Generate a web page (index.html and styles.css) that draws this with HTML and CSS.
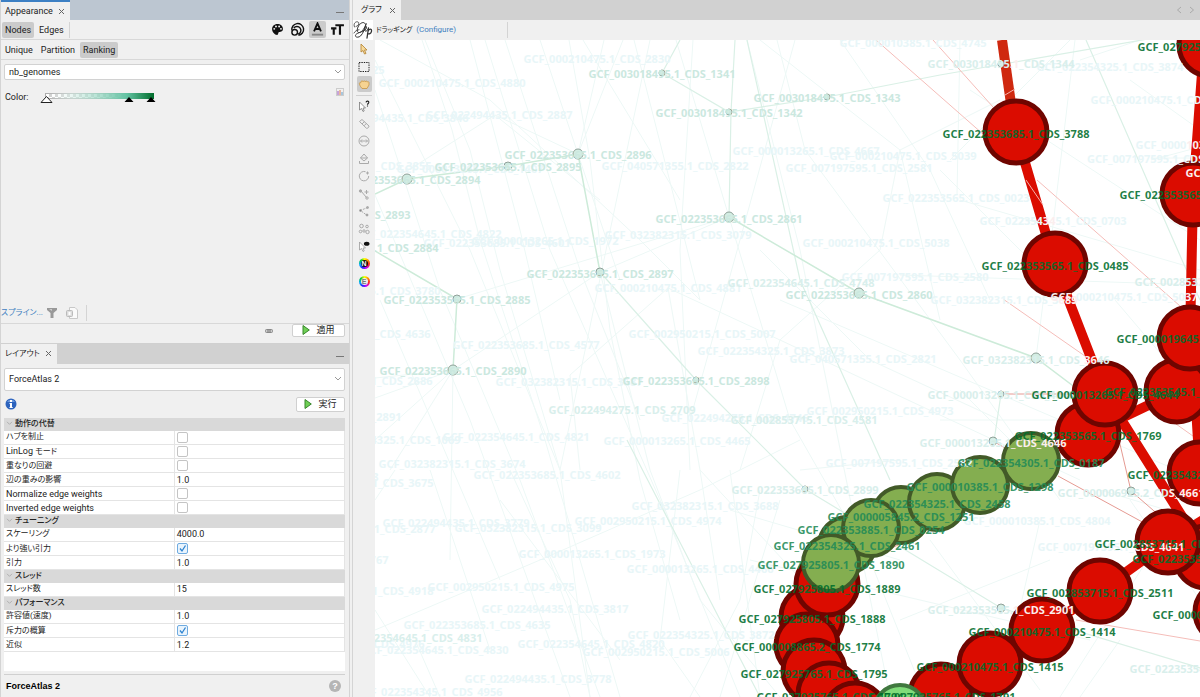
FILE: index.html
```html
<!DOCTYPE html>
<html lang="ja">
<head>
<meta charset="utf-8">
<title>Gephi</title>
<link rel="stylesheet" href="styles.css">
</head>
<body>
<div class="app">
  <aside class="sidebar">
    <section class="panel appearance">
      <header class="tabs tabs-active">
        <div class="tab tab-blue">Appearance <button class="close" aria-label="閉じる"><svg viewBox="0 0 7 7"><path d="M1 1l5 5M6 1l-5 5"/></svg></button></div>
        <button class="minimize" aria-label="最小化"></button>
      </header>
      <div class="toolrow">
        <button class="chip on">Nodes</button><button class="chip">Edges</button><span class="divider"></span>
        <div class="modes">
          <button class="mode" aria-label="色"><svg viewBox="0 0 12 12"><path fill="#111" fill-rule="evenodd" d="M6 1C2.800 1 1 3.300 1 5.600 1 8.500 3.400 11 5.600 11c1.500 0 .7-1.700 1.500-2.400C8.200 7.700 11 8.700 11 5.300 11 2.900 8.700 1 6 1zM3 6.300a.9.9 0 1 1 0-1.800.9.9 0 0 1 0 1.800zM4.600 4.100a.9.9 0 1 1 0-1.800.9.9 0 0 1 0 1.800zM7.500 4.100a.9.9 0 1 1 0-1.800.9.9 0 0 1 0 1.800zM9.200 6.300a.9.9 0 1 1 0-1.800.9.9 0 0 1 0 1.800z"/></svg></button>
          <button class="mode" aria-label="サイズ"><svg viewBox="0 0 16 16" fill="none" stroke="#111" stroke-width="1.500"><path d="M2 9A6.300 6.300 0 1 1 9 14.200"/><path d="M4 6.500a4.200 4.200 0 1 1 4.500 6.500"/><circle cx="5" cy="11" r="3"/></svg></button>
          <button class="mode on" aria-label="ラベルの色"><svg viewBox="0 0 16 16"><path d="M4.300 10L8 1.500l3.700 8.500M5.600 7.500h4.800" fill="none" stroke="#111" stroke-width="2"/><path d="M2 12.500h12v2H2z" fill="#888"/></svg></button>
          <button class="mode" aria-label="ラベルのサイズ"><svg viewBox="0 0 14 14"><path d="M1 6h5M3.500 6v6M5 3h8M9.300 3v9" fill="none" stroke="#111" stroke-width="2"/></svg></button>
        </div>
      </div>
      <div class="toolrow">
        <button class="chip">Unique</button><button class="chip">Partition</button><button class="chip on">Ranking</button>
      </div>
      <div class="appearance-body">
        <div class="select-wrap"><select class="select" aria-label="属性"><option>nb_genomes</option></select><svg class="chevron" viewBox="0 0 8 6"><path d="M1 1l3 3 3-3"/></svg></div>
        <div class="color-row">
          <span>Color:</span>
          <svg class="gradient" viewBox="0 0 118 14">
            <defs><linearGradient id="g"><stop offset="0" stop-color="#fff" stop-opacity="0"/><stop offset=".25" stop-color="#d9f0e9" stop-opacity=".6"/><stop offset=".75" stop-color="#62c2a2"/><stop offset="1" stop-color="#006d2c"/></linearGradient>
            <pattern id="ck" width="6" height="6" patternUnits="userSpaceOnUse"><path fill="#fff" d="M0 0h6v6H0z"/><path fill="#ccc" d="M0 0h3v3H0zM3 3h3v3H3z"/></pattern></defs>
            <rect x="5.500" y="2.500" width="108" height="5" fill="url(#ck)" stroke="#aaa"/><rect x="5" y="2" width="109" height="6" fill="url(#g)"/>
            <path d="M6.500 5.500l5.500 6H1z" fill="#fff" stroke="#222"/><path d="M89 6l4.500 5h-9zM111 6l4.500 5h-9z"/>
          </svg>
          <button class="palette" aria-label="パレット"><svg viewBox="0 0 8 8"><path fill="#ccc" d="M0 0h8v8H0z"/><path fill="#f0f0f0" d="M1 1h6v6H1z"/><path fill="#c6a3d8" d="M1 3h2v4H1z"/><path fill="#e9b7a0" d="M3 2h2v5H3z"/><path fill="#a7c7de" d="M5 4h2v3H5z"/></svg></button>
        </div>
      </div>
      <div class="linkrow">
        <a class="link ja" href="#">スプライン...</a>
        <svg class="funnel" viewBox="0 0 12 12"><path d="M1 1h10v2L7.500 6v5h-3V6L1 3z" fill="#999"/><path d="M3 2h3v2z" fill="#ccc"/></svg>
        <svg class="sheet" viewBox="0 0 12 12"><path d="M3.500.5H9L11.500 3v8.500h-8z" fill="#fafafa" stroke="#c8c8c8"/><rect x=".5" y="3.500" width="6" height="6" rx="1" fill="#ddd" stroke="#bbb"/><path d="M2.500 5h2v3h-2z" fill="#fff"/></svg>
        <span class="divider"></span>
      </div>
      <footer class="applyrow">
        <svg class="chain" viewBox="0 0 8 4"><rect x=".5" y=".5" width="7" height="3" rx="1" fill="#ccc" stroke="#888"/><path d="M2 2h4" stroke="#777"/></svg>
        <button class="run"><svg viewBox="0 0 8 10"><path d="M1 .5L7.300 5 1 9.500z" fill="#6fcf55" stroke="#38862c"/></svg>適用</button>
      </footer>
    </section>

    <section class="panel layout">
      <header class="tabs">
        <div class="tab"><span class="ja">レイアウト</span> <button class="close" aria-label="閉じる"><svg viewBox="0 0 7 7"><path d="M1 1l5 5M6 1l-5 5"/></svg></button></div>
        <button class="minimize" aria-label="最小化"></button>
      </header>
      <div class="layout-body">
        <div class="select-wrap"><select class="select tall" aria-label="レイアウト"><option>ForceAtlas 2</option></select><svg class="chevron" viewBox="0 0 8 6"><path d="M1 1l3 3 3-3"/></svg></div>
        <div class="execrow">
          <svg class="info" viewBox="0 0 12 12"><circle cx="6" cy="6" r="5.500" fill="#2c63bd"/><path d="M2 4a4.500 4 0 0 1 8 0z" fill="#6f9be0"/><path d="M5 2h2v2H5zM4.500 5H7v4h.7v1H4.500V9H5V6h-.5z" fill="#fff"/></svg>
          <button class="run"><svg viewBox="0 0 8 10"><path d="M1 .5L7.300 5 1 9.500z" fill="#6fcf55" stroke="#38862c"/></svg>実行</button>
        </div>
        <div class="props-box">
        <table class="props">
          <tbody>
          <tr class="group"><th colspan="2"><svg viewBox="0 0 8 6"><path d="M1 1l3 3 3-3"/></svg>動作の代替</th></tr>
          <tr><td class="ja"><label for="p1">ハブを制止</label></td><td><input id="p1" type="checkbox"></td></tr>
          <tr><td><label for="p2">LinLog <span class="ja">モード</span></label></td><td><input id="p2" type="checkbox"></td></tr>
          <tr><td class="ja"><label for="p3">重なりの回避</label></td><td><input id="p3" type="checkbox"></td></tr>
          <tr><td class="ja">辺の重みの影響</td><td>1.0</td></tr>
          <tr><td><label for="p4">Normalize edge weights</label></td><td><input id="p4" type="checkbox"></td></tr>
          <tr><td><label for="p5">Inverted edge weights</label></td><td><input id="p5" type="checkbox"></td></tr>
          <tr class="group"><th colspan="2"><svg viewBox="0 0 8 6"><path d="M1 1l3 3 3-3"/></svg>チューニング</th></tr>
          <tr><td class="ja">スケーリング</td><td>4000.0</td></tr>
          <tr><td class="ja"><label for="p6">より強い引力</label></td><td><input id="p6" type="checkbox" checked></td></tr>
          <tr><td class="ja">引力</td><td>1.0</td></tr>
          <tr class="group"><th colspan="2"><svg viewBox="0 0 8 6"><path d="M1 1l3 3 3-3"/></svg>スレッド</th></tr>
          <tr><td class="ja">スレッド数</td><td>15</td></tr>
          <tr class="group"><th colspan="2"><svg viewBox="0 0 8 6"><path d="M1 1l3 3 3-3"/></svg>パフォーマンス</th></tr>
          <tr><td class="ja">許容値(速度)</td><td>1.0</td></tr>
          <tr><td class="ja"><label for="p7">斥力の概算</label></td><td><input id="p7" type="checkbox" checked></td></tr>
          <tr><td class="ja">近似</td><td>1.2</td></tr>
          </tbody>
        </table>
        </div>
        <footer class="caption"><strong>ForceAtlas 2</strong><button class="help" aria-label="ヘルプ">?</button></footer>
      </div>
    </section>
  </aside>

  <main class="graph">
    <header class="tabs">
      <div class="tab"><span class="ja">グラフ</span> <button class="close" aria-label="閉じる"><svg viewBox="0 0 7 7"><path d="M1 1l5 5M6 1l-5 5"/></svg></button></div>
      <svg class="arrows" viewBox="0 0 20 8"><path d="M5 1L1.500 4 5 7M14 1l3.500 3L14 7" fill="none" stroke="#aaa"/></svg>
    </header>
    <div class="graph-bar">
      <svg class="logo" viewBox="0 0 20 20"><path fill="#fff" d="M0 0h20v20H0z"/><g fill="none" stroke="#333" stroke-linecap="round"><path stroke-width="1" d="M12 3.500c-1-2-4.500-1-6.500 2.500-2.200 4-1.500 7 1 6.500 2.700-.6 5.200-4.500 6.700-9-1.200 4.500-3 10-5.700 12.500-2 1.800-5.500 1.500-5-.7.400-2 4.500-2.500 7.500-4.300"/><path stroke-width=".8" d="M1.500 7C-.2 3.500 3 1 5 2s.3 4-2 4.500M1 13c1-2 3-3 5-3.300"/><path stroke-width="1" d="M10 11c2.500-.5 4-3 3.500-4.300s-2 1-1.700 3.300c.3 2 2.200 1.500 3.200-1"/><path stroke-width="1.300" d="M15.500 8L14 18M15 11.500c1-3.300 4-3 3.500-.2-.5 2.200-2.500 3.200-4 2.200"/></g></svg>
      <span class="status">ドラッギング</span><a class="configure" href="#">(Configure)</a><span class="divider"></span>
    </div>
    <div class="workspace">
      <nav class="tools">
        <button class="tool" aria-label="選択"><svg viewBox="0 0 12 12"><path d="M3 1l6 6H6.500l1.500 3.500-1.500.5L5 7.500 3 9z" fill="#f6d99a" stroke="#b98a3c" stroke-width=".9"/></svg></button>
        <button class="tool" aria-label="矩形選択"><svg viewBox="0 0 12 12"><rect x="1" y="1.500" width="10" height="9" fill="none" stroke="#222" stroke-dasharray="1.400 1"/></svg></button>
        <button class="tool on" aria-label="ドラッグ"><svg viewBox="0 0 12 12"><path d="M2.500 5c-1.500-1-1.500 1 0 3.500L4 10.500h5L11 7V4.500c-.5-1.200-1.500-1-1.700-.4-.2-1.400-1.700-1.400-2-.3-.3-1.300-1.900-1.300-2.200-.1C4.800 2.300 3 2.600 3 4z" fill="#f6d391" stroke="#c79645" stroke-width=".8"/></svg></button>
        <hr>
        <button class="tool" aria-label="ノード情報"><svg viewBox="0 0 12 12"><path d="M1.500 2v8l2-1.500L5 11.500l1.200-.6L5 8h2.500z" fill="#fff" stroke="#777" stroke-width=".8"/><path d="M8 2.300C8.300.5 11 .8 10.800 2.500c-.1 1-1.300 1-1.300 2.200M9.500 5.500v1" fill="none" stroke="#222" stroke-width="1.100"/></svg></button>
        <button class="tool" aria-label="ブラシ"><svg viewBox="0 0 12 12" class="ic"><path d="M1.500 3.500L4 1.500l7 6.500c0 1.500-1.500 2.500-2.500 2.300zM4 6l2.500-2.500M6 7.800l2.500-2.500"/></svg></button>
        <button class="tool" aria-label="サイズ"><svg viewBox="0 0 12 12" class="ic"><circle cx="6" cy="6" r="5"/><path d="M2.500 6h7M4 4.500L2.500 6 4 7.500M8 4.500L9.500 6 8 7.500"/></svg></button>
        <button class="tool" aria-label="塗りつぶし"><svg viewBox="0 0 12 12" class="ic"><path d="M6 1L2.500 5 6 8l3.500-3zM2.500 5h7M1.500 8v2.500h9V8"/></svg></button>
        <button class="tool" aria-label="ノード追加"><svg viewBox="0 0 12 12" class="ic"><path d="M7.500 1.700A4.700 4.700 0 1 0 10.700 6M8 3h3M9.500 1.500v3"/></svg></button>
        <button class="tool" aria-label="エッジ追加"><svg viewBox="0 0 12 12" class="ic"><path d="M3 3l5.500 6.500M6.500 4h4M8.500 2v4"/><circle cx="2.500" cy="3" r="1.200" fill="#aaa"/><circle cx="9" cy="10" r="1.200"/></svg></button>
        <button class="tool" aria-label="最短経路"><svg viewBox="0 0 12 12" class="ic"><path d="M9.500 2.500l-7 3 6 4.500" stroke-dasharray="2 1"/><circle cx="9.500" cy="2.500" r="1" fill="#aaa"/><circle cx="2.500" cy="5.500" r="1" fill="#888"/><circle cx="9" cy="10" r="1" fill="#888"/></svg></button>
        <button class="tool" aria-label="ヒートマップ"><svg viewBox="0 0 12 12" class="ic"><circle cx="3.500" cy="3" r="1.800"/><circle cx="9" cy="3.500" r="1.300"/><circle cx="2.500" cy="8.500" r="1.300"/><circle cx="6" cy="8" r="1.200"/><circle cx="9.500" cy="9" r="1.700"/></svg></button>
        <button class="tool" aria-label="編集"><svg viewBox="0 0 12 12"><path d="M1.500 2v8l2-1.500L5 11.500l1.200-.6L5 8h2.500z" fill="#fff" stroke="#999" stroke-width=".8"/><ellipse cx="8.700" cy="3.700" rx="2.800" ry="2" fill="#111"/></svg></button>
        <button class="tool wheel" aria-label="ノード色"><span class="ring"><b>N</b></span></button>
        <button class="tool wheel" aria-label="エッジ色"><span class="ring pale-ring"><b>E</b></span></button>
      </nav>
      <svg class="canvas" viewBox="375 40 825 657" preserveAspectRatio="xMinYMin slice">
        <g class="web">
          <path d="M375 60L470 250 560 470M380 40L490 100 560 165 640 240 700 300M422 40L452 130 480 240 545 440 620 697M425 40L470 150 500 270 560 470 590 697M470 40L520 230 560 400M485 40L550 250 660 500 740 697M505 40L580 270 640 420M540 40L620 280M569 40L590 160 610 330 640 480M583 40L680 200M604 40L578 154M623 40L578 154M650 40L560 470M634 40L700 300M375 90L440 290 520 480 600 697M375 195L470 420 570 697M393 180L495 115 578 154M495 115L600 200M380 300L500 580M600 272L453 370 375 398M453 370L375 440M453 370L390 470M453 370L450 560M453 370L375 378M457 299L729 217M600 272L729 217M668 288L570 375 580 470M668 288L700 470 720 600M600 272L650 470M676 40L729 217 790 420 870 560M693 40L680 250 690 470M747 40L800 250 890 697M777 40L805 150 960 360 1060 500M795 40L740 240 690 420M840 40L930 170 990 300M760 40L900 150M900 150L940 320M900 150L1000 100M900 150L880 250 780 340 740 470M760 250L870 360 1000 420M668 288L780 340 940 415 1080 480M375 630L540 560 700 490 800 440M700 470L820 600M730 470L760 697M650 470L700 600 780 697M680 470L660 640 700 697M760 490L740 600 690 697M640 480L680 620M510 470L570 600 590 697M500 500L620 660M375 610L430 697M415 640L440 697M375 500L395 470M430 470L490 650M780 500L720 697M950 160L1070 40M960 40L957 195M1075 40L1053 225 1036 358M960 200L1200 270M940 170L1030 260M970 90L1200 240M1080 60L1200 20M1151 160L1200 147M1151 158H1200M900 275L1200 285M940 420H1080M780 300L1200 480M960 390L1040 470M800 470L900 460M930 540L1040 690M900 620L1050 560M1040 520L1000 697M1120 640L1080 697M1130 500L1200 600M750 560L1090 640M1160 540L1060 697M730 510L900 560M870 560L925 697M1115 300L1200 400M1130 80L1200 130M1100 490L1200 520"/>
        </g>
        <g class="soft">
          <path d="M375 194L407 179 508 166 578 154 600 272"/><path class="s1" d="M600 272L696 380 805 489 1001 608 1200 668M662 73L680 40M662 73L729 112 827 97 940 75 1200 30M735 40L731 112 729 217M747 40L800 280 890 480M1086 40L1182 260 1200 300M1001 394L994 441M627 440L760 697"/>
          <path d="M729 217L859 293 1036 358 1105 410M375 251L457 299 453 370"/>
        </g>
        <g class="redline"><path d="M876 40L992 142M933 40L993 107M1037 180L1180 306M1003 299L1095 363M1076 620L1200 641M1176 424L1200 441"/><path class="r2" d="M1004 394H1075M993 441l12 7M1058 476l88 48M1119 440l12 51 30 26M863 562l35-17"/></g>
        <g class="thick">
          <path stroke="#cf280f" d="M1002 40L1014 125"/>
          <path d="M1016 132L1055 265 1105 394M1193 194L1190 338M1193 194L1203 60M1088 434L1178 391M1195 391L1200 473M1105 394L1200 545M1203 520L1168 542 1100 591 1042 630 990 664"/>
          <path class="thin" stroke="#f4b0aa" d="M1005 95l10-6M1026 180l17 25"/>
        </g>
        <g class="dots">
          <circle cx="662" cy="73" r="3"/><circle cx="729" cy="112" r="3"/><circle cx="827" cy="97" r="3"/><circle cx="508" cy="166" r="4"/><circle cx="578" cy="154" r="5"/><circle cx="407" cy="179" r="5"/><circle cx="729" cy="217" r="5"/><circle cx="600" cy="272" r="4"/><circle cx="457" cy="299" r="4"/><circle cx="453" cy="370" r="5"/><circle cx="859" cy="293" r="5"/><circle cx="696" cy="380" r="3"/><circle cx="1036" cy="358" r="5"/><circle cx="1001" cy="394" r="3"/><circle cx="993" cy="441" r="4"/><circle cx="1131" cy="491" r="4"/><circle cx="805" cy="489" r="3"/><circle cx="1001" cy="608" r="4"/><circle cx="1001" cy="64" r="3"/>
        </g>
        <g class="red">
          <circle cx="1210" cy="45" r="31"/><circle cx="1016" cy="132" r="31"/><circle cx="1193" cy="194" r="31"/><circle cx="1055" cy="264" r="31"/><circle cx="1177" cy="391" r="31"/><circle cx="1190" cy="338" r="31"/><circle cx="1088" cy="434" r="31"/><circle cx="1105" cy="394" r="31"/><circle cx="1200" cy="473" r="31"/><circle cx="1206" cy="557" r="31"/><circle cx="1168" cy="542" r="31"/><circle cx="1226" cy="612" r="31"/><circle cx="1100" cy="591" r="31"/><circle cx="941" cy="695" r="31"/><circle cx="1042" cy="630" r="31"/><circle cx="990" cy="664" r="31"/>
          <circle cx="812" cy="617" r="31"/><circle cx="807" cy="645" r="31"/><circle cx="814" cy="671" r="31"/><circle cx="829" cy="694" r="31"/><circle cx="855" cy="714" r="31"/><circle cx="827" cy="584" r="31"/>
        </g>
        <g class="green">
          <circle cx="900" cy="711" r="26" fill="#80dc7a" stroke="#40783f"/>
          <circle cx="847" cy="545" r="28"/><circle cx="901" cy="515" r="28"/><circle cx="871" cy="528" r="28"/><circle cx="831" cy="563" r="28"/><circle cx="937" cy="502" r="28"/><circle cx="1031" cy="461" r="28"/><circle cx="980" cy="485" r="28"/>
        </g>
        <g class="label faint">
          <text x="597" y="63">GCF_000210475.1_CDS_2830</text><text x="311" y="74">GCF_022353685.1_CDS_4625</text><text x="452" y="87">GCF_000210475.1_CDS_4880</text><text x="395" y="122">GCF_022494435.1_CDS_3846</text><text x="499" y="119">GCF_022494435.1_CDS_2887</text><text x="470" y="173">GCF_000013265.1_CDS_1407</text><text x="358" y="170">GCF_022353685.1_CDS_3855</text><text x="428" y="238">GCF_022354645.1_CDS_4822</text><text x="497" y="247">GCF_022353685.1_CDS_4601</text><text x="545" y="245">GCF_000013265.1_CDS_1972</text><text x="678" y="239">GCF_032382315.1_CDS_3079</text><text x="675" y="170">GCF_040571355.1_CDS_2822</text>
          <text x="806" y="155">GCF_000013265.1_CDS_4667</text><text x="903" y="160">GCF_000210475.1_CDS_5039</text><text x="859" y="172">GCF_007197595.1_CDS_2581</text><text x="956" y="202">GCF_022353565.1_CDS_0023</text><text x="876" y="247">GCF_000210475.1_CDS_5038</text><text x="913" y="47">GCF_000010385.1_CDS_4745</text><text x="1110" y="71">GCF_022354325.1_CDS_3874</text><text x="1164" y="104">GCF_000210475.1_CDS_1364</text><text x="1151" y="163">GCF_007197595.1_CDS_<tspan class="w">4</tspan></text><text x="1209" y="149">GCF_0000<tspan class="w">10385.1_CDS_4803</tspan></text><text x="1053" y="225">GCF_022354<tspan class="w">34</tspan>5.1_CDS_0703</text>
          <text x="668" y="292">GCF_000210475.1_CDS_4881</text><text x="367" y="295">GCF_022353685.1_CDS_3780</text><text x="357" y="338">GCF_022353685.1_CDS_4636</text><text x="526" y="349">GCF_022353685.1_CDS_4577</text><text x="702" y="338">GCF_002950215.1_CDS_5007</text><text x="359" y="385">GCF_022353665.1_CDS_2886</text><text x="569" y="386">GCF_032382315.1_CDS_3687</text><text x="735" y="422">GCF_022494275.1_CDS_4746</text><text x="328" y="421">GCF_022353665.1_CDS_2891</text><text x="387" y="444">GCF_022354325.1_CDS_1069</text><text x="516" y="441">GCF_022354645.1_CDS_4821</text><text x="677" y="445">GCF_000013265.1_CDS_4465</text><text x="452" y="468">GCF_032382315.1_CDS_3674</text><text x="547" y="479">GCF_022353685.1_CDS_4602</text>
          <text x="915" y="281">GCF_007197595.1_CDS_2580</text><text x="771" y="355">GCF_022354325.1_CDS_3873</text><text x="863" y="363">GCF_040571355.1_CDS_2821</text><text x="880" y="415">GCF_002950215.1_CDS_4973</text><text x="899" y="467">GCF_007197595.1_CDS_2582</text><text x="1004" y="304">GCF_032382315.1_CDS_3<tspan class="w">689</tspan></text><text x="1124" y="301"><tspan class="w">GCF_</tspan>000210475.1_CDS_50<tspan class="w">37</tspan></text>
          <text x="360" y="487">GCF_032382315.1_CDS_3675</text><text x="305" y="481">GCF_022353685.1_CDS_4578</text><text x="456" y="527">GCF_022494435.1_CDS_3779</text><text x="362" y="533">GCF_022353685.1_CDS_2877</text><text x="528" y="532">GCF_032382315.1_CDS_3099</text><text x="648" y="525">GCF_002950215.1_CDS_4974</text><text x="705" y="510">GCF_032382315.1_CDS_3688</text><text x="592" y="558">GCF_000013265.1_CDS_1973</text><text x="315" y="564">GCF_022353685.1_CDS_3767</text><text x="360" y="595">GCF_002950215.1_CDS_4918</text><text x="700" y="573">GCF_000013265.1_CDS_4466</text><text x="501" y="591">GCF_002950215.1_CDS_4975</text><text x="555" y="613">GCF_022494435.1_CDS_3817</text><text x="477" y="629">GCF_022353685.1_CDS_4635</text><text x="351" y="648">GCF_002950215.1_CDS_4976</text><text x="435" y="654">GCF_022354645.1_CDS_4830</text><text x="591" y="648">GCF_022354645.1_CDS_4820</text><text x="656" y="656">GCF_002950215.1_CDS_5006</text><text x="701" y="639">GCF_022354325.1_CDS_3872</text><text x="538" y="683">GCF_022494435.1_CDS_3778</text><text x="429" y="696">GCF_022354345.1_CDS_4956</text><text x="1037" y="525">GCF_000010385.1_CDS_4804</text><text x="1111" y="551">GCF_007197595.1_<tspan class="w">CDS_4641</tspan></text>
        </g>
        <g class="label pale">
          <text x="801" y="287">GCF_022354645.1_CDS_4748</text><text x="804" y="424">GCF_002853715.1_CDS_4581</text><text x="622" y="414">GCF_022494275.1_CDS_2709</text><text x="409" y="642">GCF_022354645.1_CDS_4831</text><text x="1001" y="399">GCF_000013265.1_CDS_4645</text><text x="1131" y="497">GCF_000006925.2_CD<tspan class="w">S_4661</tspan></text><text x="1001" y="614">GCF_022353565.<tspan class="w">1_CDS_2901</tspan></text><text x="805" y="494">GCF_022353665.1_CDS_2899</text><text x="1203" y="673">GCF_022353545.1_CDS_2900</text><text x="1001" y="68">GCF_003018495<tspan class="w">.1</tspan>_CDS_1344</text><text x="1208" y="286">GCF_002853<tspan class="w">715.1_CDS_4582</tspan></text><text x="1036" y="364">GCF_032382315.1_CDS_<tspan class="w">36</tspan>46</text><text x="993" y="447">GCF_000013265.1<tspan class="w">_CDS_4646</tspan></text>
        </g>
        <g class="label mid">
          <text x="662" y="78">GCF_003018495.1_CDS_1341</text><text x="729" y="117">GCF_003018495.1_CDS_1342</text><text x="827" y="102">GCF_003018495.1_CDS_1343</text><text x="578" y="159">GCF_022353665.1_CDS_2896</text><text x="508" y="171">GCF_022353665.1_CDS_2895</text><text x="407" y="184">GCF_022353665.1_CDS_2894</text><text x="337" y="219">GCF_022353665.1_CDS_2893</text><text x="365" y="252">GCF_022353665.1_CDS_2884</text><text x="729" y="223">GCF_022353665.1_CDS_2861</text><text x="600" y="278">GCF_022353665.1_CDS_2897</text><text x="457" y="304">GCF_022353565.1_CDS_2885</text><text x="453" y="375">GCF_022353665.1_CDS_2890</text><text x="859" y="299">GCF_022353665.1_CDS_2860</text><text x="696" y="385">GCF_022353665.1_CDS_2898</text>
        </g>
        <g class="label sea">
          <text x="1031" y="467">GCF_022354305.1_CDS_0187</text><text x="980" y="491">GCF_000010385.1_CDS_1298</text><text x="937" y="508">GCF_022354325.1_CDS_2458</text><text x="901" y="521">GCF_000005845.2_CDS_1251</text><text x="871" y="534">GCF_022353885.1_CDS_0254</text><text x="847" y="550">GCF_022354325.1_CDS_2461</text><text x="831" y="569">GCF_027925805.1_CDS_1890</text>
        </g>
        <g class="label deep">
          <text x="1211" y="51">GCF_027925805.1_CDS_0702</text><text x="1016" y="138">GCF_022353685.1_CDS_3788</text><text x="1193" y="199">GCF_022353565.1_CDS_0484</text><text x="1055" y="270">GCF_022353565.1_CDS_0485</text><text x="1190" y="343">GCF_000019645.1_CDS_1770</text><text x="1105" y="399">GCF_000013265.1_CDS_4644</text><text x="1178" y="396">GCF_022353545.1_CDS_1768</text><text x="1088" y="440">GCF_022353565.1_CDS_1769</text><text x="1201" y="479">GCF_022354325.1_CDS_2512</text><text x="1168" y="548">GCF_002853715.1_CDS_2510</text><text x="1206" y="563">GCF_022353565.1_CDS_1412</text><text x="1226" y="619">GCF_000010385.1_CDS_1413</text><text x="1100" y="597">GCF_002853715.1_CDS_2511</text><text x="1042" y="636">GCF_000210475.1_CDS_1414</text><text x="990" y="671">GCF_000210475.1_CDS_1415</text><text x="827" y="593">GCF_027925805.1_CDS_1889</text><text x="812" y="623">GCF_027925805.1_CDS_1888</text><text x="807" y="651">GCF_000008865.2_CDS_1774</text><text x="814" y="678">GCF_027925765.1_CDS_1795</text><text x="830" y="701">GCF_027925765.1_CDS_1794</text><text x="942" y="701">GCF_027925765.1_CDS_1791</text>
        </g>
        <g class="label white"><text x="1259" y="177">GCF_022354345.1_CDS_0704</text></g>
      </svg>
    </div>
  </main>
</div>
</body>
</html>
```
FILE: styles.css
```css
* { box-sizing: border-box; }
body { margin: 0; background: #f0f0f0; color: #222; font: 9px/12px Roboto, "Noto Sans CJK JP", sans-serif; font-feature-settings: "palt"; }
button, select, input { font: inherit; color: inherit; margin: 0; padding: 0; border: 0; background: none; font-feature-settings: inherit; }
svg { display: block; flex: none; }
a { text-decoration: none; }
.ja { font-size: 8px; }

.app { display: flex; height: 100vh; }
.sidebar { flex: 0 0 350px; display: flex; flex-direction: column; border-left: 1px solid #d4d4d4; border-right: 1px solid #d4d4d4; }
.panel { display: flex; flex-direction: column; min-height: 0; }
.appearance { flex: 343 1 0; border-bottom: 1px solid #d0d0d0; }
.layout { flex: 354 1 0; }

.tabs { display: flex; flex: 0 0 20px; align-items: stretch; justify-content: space-between; background: #d1d1d1; }
.tabs-active { background: #bcc6d1; }
.tab { display: flex; align-items: center; gap: 5px; padding: 0 5px 0 4px; background: #f0f0f0; }
.tab-blue { border-top: 2px solid #3d80c4; }
.close svg { width: 7px; height: 7px; fill: none; stroke: #666; }
.minimize { align-self: flex-end; width: 8px; height: 1px; margin: 0 5px 7px 0; background: #777; }

.toolrow { display: flex; flex: 0 0 20px; align-items: center; gap: 2px; padding-left: 1px; border-bottom: 1px solid #d8d8d8; }
.chip { height: 16px; padding: 0 3px; border-radius: 2px; }
.chip.on, .mode.on, .tool.on { background: #cbcbcb; }
.divider { width: 1px; height: 16px; background: #d4d4d4; }
.modes { display: flex; gap: 3px; margin-left: auto; padding-right: 3px; }
.mode { display: grid; place-items: center; width: 17px; height: 17px; border-radius: 2px; }
.mode svg { width: 15px; height: 15px; }
.mode:first-child svg { width: 13px; height: 13px; }
.appearance-body { flex: 1; padding: 4px 4px 0 3px; }
.select-wrap { position: relative; }
.select { display: block; width: 100%; height: 16px; padding: 0 4px; appearance: none; background: #fff; border: 1px solid #d2d2d2; border-radius: 2px; }
.select.tall { height: 23px; }
.chevron { position: absolute; right: 3px; top: 50%; width: 8px; height: 6px; margin-top: -3px; fill: none; stroke: #999; }
.color-row { display: flex; align-items: center; gap: 11px; padding: 8px 1px; }
.gradient { width: 118px; height: 14px; margin-top: 3px; }
.palette { align-self: flex-start; margin-left: auto; }
.palette svg { width: 8px; height: 8px; }
.linkrow { display: flex; flex: 0 0 20px; align-items: center; gap: 8px; border-bottom: 1px solid #d8d8d8; }
.link, .configure { color: #3f80c0; }
.funnel { width: 12px; height: 12px; margin-left: -5px; }
.sheet { width: 12px; height: 12px; }
.applyrow { display: flex; flex: 0 0 19px; align-items: flex-start; justify-content: flex-end; gap: 19px; padding-right: 4px; }
.chain { width: 8px; height: 4px; margin-top: 5px; }
.run { display: flex; align-items: center; justify-content: center; gap: 6px; width: 53px; height: 13px; background: #fff; border: 1px solid #d0d0d0; border-radius: 2px; }
.run svg { width: 8px; height: 10px; }

.layout-body { display: flex; flex: 1; flex-direction: column; min-height: 0; padding: 4px 4px 0 3px; }
.execrow { display: flex; flex: 0 0 27px; align-items: center; justify-content: space-between; padding-left: 1px; }
.execrow .run { width: 49px; height: 15px; }
.info { width: 12px; height: 12px; }
.props-box { flex: 1; background: #fff; }
.props { width: 100%; table-layout: fixed; border-collapse: collapse; }
.props tr { height: 14px; }
.props td { height: 14px; padding: 0 2px; border-bottom: 1px solid #e4e4e4; border-right: 1px solid #e4e4e4; line-height: 12px; }
.props td:first-child { width: 50%; }
.props tr.group, .props th { height: 13px; }
.props th { padding: 0 2px; background: #d9d9d9; text-align: left; font-size: 8px; font-weight: 500; line-height: 12px; }
.props th svg { display: inline-block; width: 7px; height: 5px; margin-right: 2px; fill: none; stroke: #aaa; }
.props input { display: block; width: 11px; height: 11px; appearance: none; background: #fff; border: 1px solid #c4c4c4; border-radius: 2px; }
.props input:checked { border-color: #6fabe0; background: #e9f4fd url("data:image/svg+xml,%3Csvg xmlns='http://www.w3.org/2000/svg' viewBox='0 0 9 9'%3E%3Cpath d='M2 4.500l2 2.500 3.500-5.500' fill='none' stroke='%232f84d0' stroke-width='1.300'/%3E%3C/svg%3E") center / 9px 9px no-repeat; }
.caption { display: flex; flex: 0 0 23px; align-items: center; justify-content: space-between; margin-top: 3px; padding: 0 4px 0 2px; border-top: 1px solid #d0d0d0; color: #000; font-family: "Liberation Sans", sans-serif; }
.help { width: 12px; height: 12px; border-radius: 50%; background: #b5b5b5; color: #fff; font-weight: bold; line-height: 12px; text-align: center; }

.graph { display: flex; flex: 1; flex-direction: column; min-width: 0; margin-left: 2px; border-left: 1px solid #d4d4d4; }
.graph .tab { gap: 7px; padding: 0 5px 0 8px; }
.arrows { width: 20px; height: 8px; margin: 6px 4px 0 0; }
.graph-bar { display: flex; flex: 0 0 20px; align-items: center; }
.logo { width: 20px; height: 20px; }
.status { margin: 0 4px 0 3px; font-size: 7px; }
.configure { font-size: 8px; }
.graph-bar .divider { margin-left: 51px; }
.workspace { display: flex; flex: 1; min-height: 0; }
.tools { display: flex; flex: 0 0 22px; flex-direction: column; align-items: center; }
.tool { display: grid; place-items: center; flex: none; width: 15px; height: 18px; border-radius: 2px; }
.tool.on { height: 16px; }
.tool svg { width: 12px; height: 12px; }
.tools hr { width: 16px; height: 1px; margin: 3px 0 1px; border: 0; background: #d0d0d0; }
.ic { fill: none; stroke: #aaa; }
.tools hr ~ .tool { height: 17px; }
.tools hr ~ .tool:nth-child(odd) { height: 18px; }
.ring { display: grid; place-items: center; width: 11px; height: 11px; border-radius: 50%; background: conic-gradient(#ff0, #f80, #f22, #c0f, #22f, #0af, #0c3, #ff0); }
.ring b { width: 7px; height: 7px; border-radius: 50%; background: #111; color: #fff; font: bold 7px/7px "Liberation Sans", sans-serif; text-align: center; }
.pale-ring b { background: #eee; color: #777; }

.canvas { flex: 1; min-width: 0; height: 100%; background: #fff; }
.web, .soft, .redline, .thick { fill: none; }
.web { stroke: #edf8f6; }
.soft { stroke: #cdebd9; stroke-width: 1.5; }
.soft .s1 { stroke: #daf0e6; stroke-width: 1.2; }
.redline { stroke: #f5bdb9; stroke-width: 1; }
.redline .r2 { stroke: #e59a92; }
.thick { stroke: #db0c00; stroke-width: 10; }
.thick .thin { stroke-width: 1; }
.dots { fill: #d3ede3; stroke: #8fa098; }
.red { fill: #db0c00; stroke: #6f0500; stroke-width: 5; }
.green { fill: #84ae50; stroke: #425a28; stroke-width: 4; }
.label { font: bold 11px "Noto Sans", sans-serif; text-anchor: middle; }
.faint { fill: #e8f6f8; }
.pale { fill: #d9efec; }
.mid { fill: #cbe8df; }
.sea { fill: #238b57; fill-opacity: .9; }
.deep { fill: #006d2c; fill-opacity: .88; }
.label .w, .white { fill: #fbeeee; }
```
